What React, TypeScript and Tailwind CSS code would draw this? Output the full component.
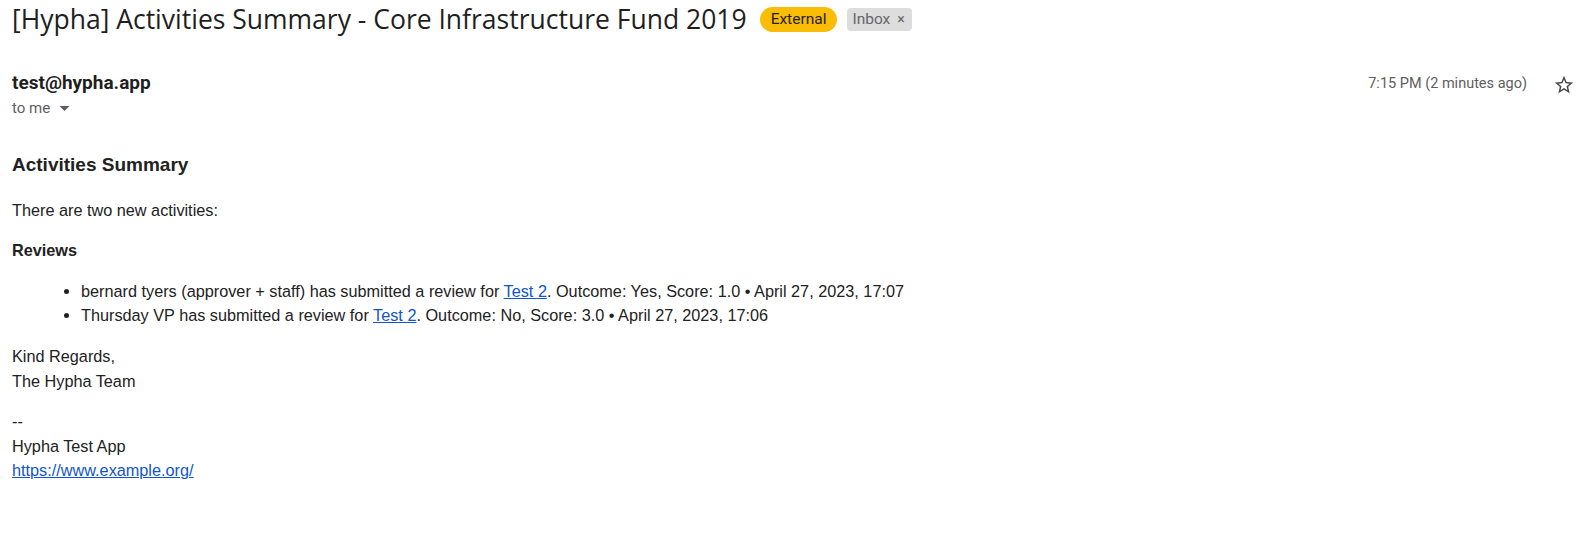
import React from "react";

export default function App() {
  return (
    <div className="w-[1584px] h-[546px] bg-white overflow-hidden text-[#222222]" style={{ fontFamily: "Roboto, 'Liberation Sans', sans-serif" }}>
      <div className="flex items-center pl-[12px] pt-[2px] h-[36px]">
        <h2 className="text-[26.5px] leading-[30px] text-[#1f1f1f] font-normal" style={{ fontFamily: "'Open Sans', Roboto, sans-serif" }}>
          [Hypha] Activities Summary - Core Infrastructure Fund 2019
        </h2>
        <span className="ml-[13px] h-[25px] px-[11px] rounded-full bg-[#fbbc04] text-[#1f1f1f] text-[15.5px] leading-[25px]">External</span>
        <span className="ml-[10px] h-[23px] pl-[5px] pr-[7px] rounded-[4px] bg-[#dddddd] text-[#666666] text-[15.5px] leading-[23px] flex items-center gap-[7px]">
          Inbox
          <span className="text-[14px] leading-none">×</span>
        </span>
      </div>

      <div className="flex justify-between items-start pl-[12px] pr-[9px] mt-[35px]">
        <div>
          <div className="text-[19px] leading-[24px] font-bold text-[#1f1f1f]">test@hypha.app</div>
          <div className="flex items-center text-[15px] leading-[20px] text-[#5e5e5e] mt-[3px]">
            to me
            <svg className="ml-[9px] mt-[1px]" width="11" height="5" viewBox="0 0 10 5"><path d="M0 0 L10 0 L5 5 Z" fill="#5e5e5e" /></svg>
          </div>
        </div>
        <div className="flex items-center mt-[1px]">
          <span className="text-[14.5px] leading-[22px] text-[#5e5e5e]">7:15 PM (2 minutes ago)</span>
          <svg className="ml-[26px] mt-[2px]" width="22" height="22" viewBox="0 0 24 24">
            <path d="M22 9.24l-7.19-.62L12 2 9.19 8.63 2 9.24l5.46 4.73L5.82 21 12 17.27 18.18 21l-1.63-7.03L22 9.24zM12 15.4l-3.76 2.27 1-4.28-3.32-2.88 4.38-.38L12 6.1l1.71 4.04 4.38.38-3.32 2.88 1 4.28L12 15.4z" fill="#444746" />
          </svg>
        </div>
      </div>

      <div className="pl-[12px] mt-[35px] text-[16.25px] leading-[24.4px] text-[#222222]" style={{ fontFamily: "'Liberation Sans', Arial, sans-serif" }}>
        <h3 className="text-[19px] leading-[24px] font-bold">Activities Summary</h3>
        <p className="mt-[21px]">There are two new activities:</p>
        <p className="mt-[16px] font-bold">Reviews</p>
        <ul className="mt-[16px] pl-[69px] list-disc">
          <li>
            bernard tyers (approver + staff) has submitted a review for{" "}
            <a className="text-[#1155cc] underline" href="#">Test 2</a>. Outcome: Yes, Score: 1.0 • April 27, 2023, 17:07
          </li>
          <li>
            Thursday VP has submitted a review for{" "}
            <a className="text-[#1155cc] underline" href="#">Test 2</a>. Outcome: No, Score: 3.0 • April 27, 2023, 17:06
          </li>
        </ul>
        <p className="mt-[16.5px]">Kind Regards,<br />The Hypha Team</p>
        <p className="mt-[16.5px]">--<br />Hypha Test App<br /><a className="text-[#1155cc] underline" href="#">https://www.example.org/</a></p>
      </div>
    </div>
  );
}
